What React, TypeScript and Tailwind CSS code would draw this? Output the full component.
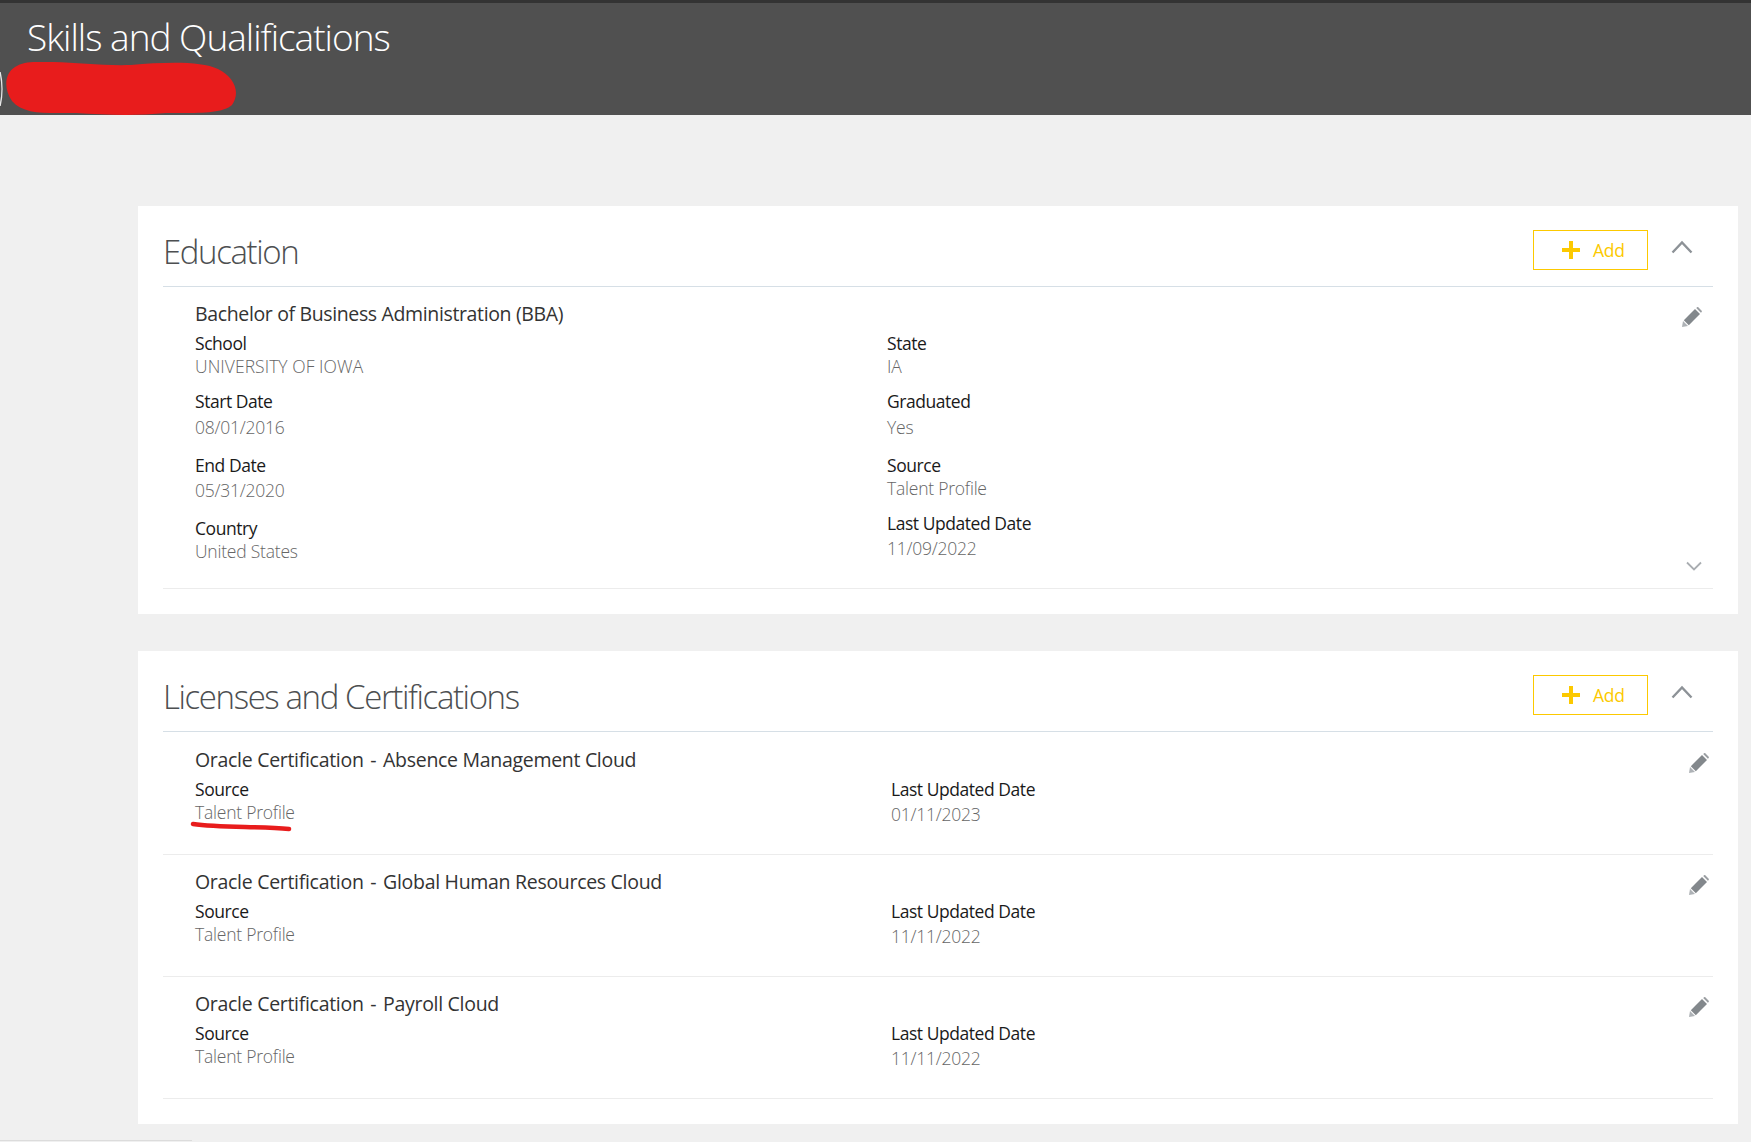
import React from "react";

const font = { fontFamily: '"Open Sans", "Noto Sans", sans-serif' };

function Pencil() {
  return (
    <svg width="20" height="20" viewBox="0 0 20 20" className="block">
      <path d="M0 20l1-6 5 5z" fill="#aeb2b6" />
      <path d="M1.8 13.2L13 2l5 5L6.8 18.2z" fill="#83888c" />
      <path d="M14.2 1.1l.9-.8c.4-.3.9-.3 1.2 0l3.4 3.4c.3.3.3.8 0 1.2l-.8.9z" fill="#9a9ea2" />
    </svg>
  );
}

function ChevronUp() {
  return (
    <svg width="22" height="14" viewBox="0 0 22 14" className="block">
      <path d="M1.5 12.5L11 2.5l9.5 10" fill="none" stroke="#8d9297" strokeWidth="2.4" />
    </svg>
  );
}

function ChevronDown() {
  return (
    <svg width="16" height="10" viewBox="0 0 16 10" className="block">
      <path d="M1 1.5l7 7 7-7" fill="none" stroke="#a9adb1" strokeWidth="1.8" />
    </svg>
  );
}

function AddButton() {
  return (
    <button className="flex h-[40px] w-[115px] items-center border border-[#fcc900] pl-[28px] text-[17.5px] leading-[24px] tracking-[-0.2px] text-[#fcc900]">
      <svg width="18" height="18" viewBox="0 0 18 18" className="mr-[13px] block">
        <path d="M7 0h4v7h7v4h-7v7H7v-7H0V7h7z" fill="#fcc900" />
      </svg>
      Add
    </button>
  );
}

function SectionHead({ title }: { title: string }) {
  return (
    <div className="flex h-[81px] items-center border-b border-[#d6dfe6] pt-[7px]">
      <h2 className="flex-1 pt-[4px] text-[33px] leading-[44px] font-light tracking-[-1.4px] text-[#4d4f51]">{title}</h2>
      <AddButton />
      <div className="mb-[5px] ml-[23px] mr-[20px]">
        <ChevronUp />
      </div>
    </div>
  );
}

function Field({
  label,
  value,
  cls,
  vcls = "tracking-[-0.22px]",
}: {
  label: string;
  value: string;
  cls?: string;
  vcls?: string;
}) {
  return (
    <div className={cls}>
      <div className="text-[17.5px] leading-[23px] tracking-[-0.45px] text-[#1a1a1a]">{label}</div>
      <div className={`text-[17.5px] leading-[23px] font-light text-[#666666] ${vcls}`}>{value}</div>
    </div>
  );
}

function CertRow({
  product,
  date,
  rowCls,
  pencilCls,
}: {
  product: string;
  date: string;
  rowCls: string;
  pencilCls: string;
}) {
  return (
    <div className={`relative border-b border-[#ececec] pl-[32px] ${rowCls}`}>
      <div className="text-[19.5px] leading-[27px] tracking-[-0.3px] text-[#333333]">
        Oracle Certification <span className="mx-[2px]">-</span> {product}
      </div>
      <div className="mt-[5px] grid grid-cols-[696px_1fr]">
        <Field label="Source" value="Talent Profile" />
        <Field label="Last Updated Date" value={date} vcls="mt-[2px] tracking-[-0.22px]" />
      </div>
      <div className={`absolute right-[4px] ${pencilCls}`}>
        <Pencil />
      </div>
    </div>
  );
}

export default function App() {
  return (
    <div className="relative min-h-[1142px] overflow-hidden bg-[#f0f0f0]" style={font}>
      <header className="h-[115px] border-t-[3px] border-[#333333] bg-[#505050] pl-[27px] pt-[9px]">
        <h1 className="text-[37px] leading-[50px] font-light tracking-[-1px] text-white">Skills and Qualifications</h1>
      </header>

      <main className="flex flex-col gap-[37px] pl-[138px] pr-[13px] pt-[91px]">
        <section className="bg-white px-[25px] pb-[25px]">
          <SectionHead title="Education" />
          <div className="relative h-[302px] border-b border-[#ececec] pl-[32px] pt-[13px]">
            <div className="text-[19.5px] leading-[27px] tracking-[-0.36px] text-[#333333]">
              Bachelor of Business Administration (BBA)
            </div>
            <div className="mt-[5px] grid grid-cols-[692px_1fr]">
              <div>
                <Field label="School" value="UNIVERSITY OF IOWA" vcls="tracking-[0.05px]" />
                <Field label="Start Date" value="08/01/2016" cls="mt-[12px]" vcls="mt-[3px] tracking-[-0.22px]" />
                <Field label="End Date" value="05/31/2020" cls="mt-[15px]" vcls="mt-[2px] tracking-[-0.22px]" />
                <Field label="Country" value="United States" cls="mt-[15px]" />
              </div>
              <div>
                <Field label="State" value="IA" />
                <Field label="Graduated" value="Yes" cls="mt-[12px]" vcls="mt-[3px] tracking-[-0.22px]" />
                <Field label="Source" value="Talent Profile" cls="mt-[15px]" />
                <Field label="Last Updated Date" value="11/09/2022" cls="mt-[12px]" vcls="mt-[2px] tracking-[-0.22px]" />
              </div>
            </div>
            <div className="absolute right-[11px] top-[20px]">
              <Pencil />
            </div>
            <div className="absolute bottom-[17px] right-[11px]">
              <ChevronDown />
            </div>
          </div>
        </section>

        <section className="bg-white px-[25px] pb-[25px]">
          <SectionHead title="Licenses and Certifications" />
          <CertRow product="Absence Management Cloud" date="01/11/2023" rowCls="h-[123px] pt-[14px]" pencilCls="top-[21px]" />
          <CertRow product="Global Human Resources Cloud" date="11/11/2022" rowCls="h-[122px] pt-[13px]" pencilCls="top-[20px]" />
          <CertRow product="Payroll Cloud" date="11/11/2022" rowCls="h-[122px] pt-[13px]" pencilCls="top-[20px]" />
        </section>
      </main>

      {/* hand-drawn red redaction marks over the screenshot */}
      <svg className="absolute left-[6px] top-[62px]" width="232" height="54" viewBox="0 0 232 54">
        <path
          d="M30 0C60 -1 90 4 125 3C160 0 195 -1 212 7C228 15 235 30 226 43C216 52 190 51 160 51C130 54 100 53 70 51C40 51 18 53 6 39C-3 26 -1 11 9 5C15 1 22 0 30 0Z"
          fill="#e81c1c"
        />
      </svg>
      <svg className="absolute left-0 top-[72px]" width="3" height="34" viewBox="0 0 3 34">
        <path d="M0 0C2.5 10 2.5 24 0 34" fill="none" stroke="#e8e8e8" strokeWidth="1.5" />
      </svg>
      <svg className="absolute left-[190px] top-[820px]" width="104" height="12" viewBox="0 0 104 12">
        <path d="M3 4C30 8 70 6 99 9" fill="none" stroke="#e81c1c" strokeWidth="4.5" strokeLinecap="round" />
      </svg>
      <div className="absolute bottom-[1px] left-0 h-px w-[192px] bg-[#dcdcdc]" />
    </div>
  );
}
